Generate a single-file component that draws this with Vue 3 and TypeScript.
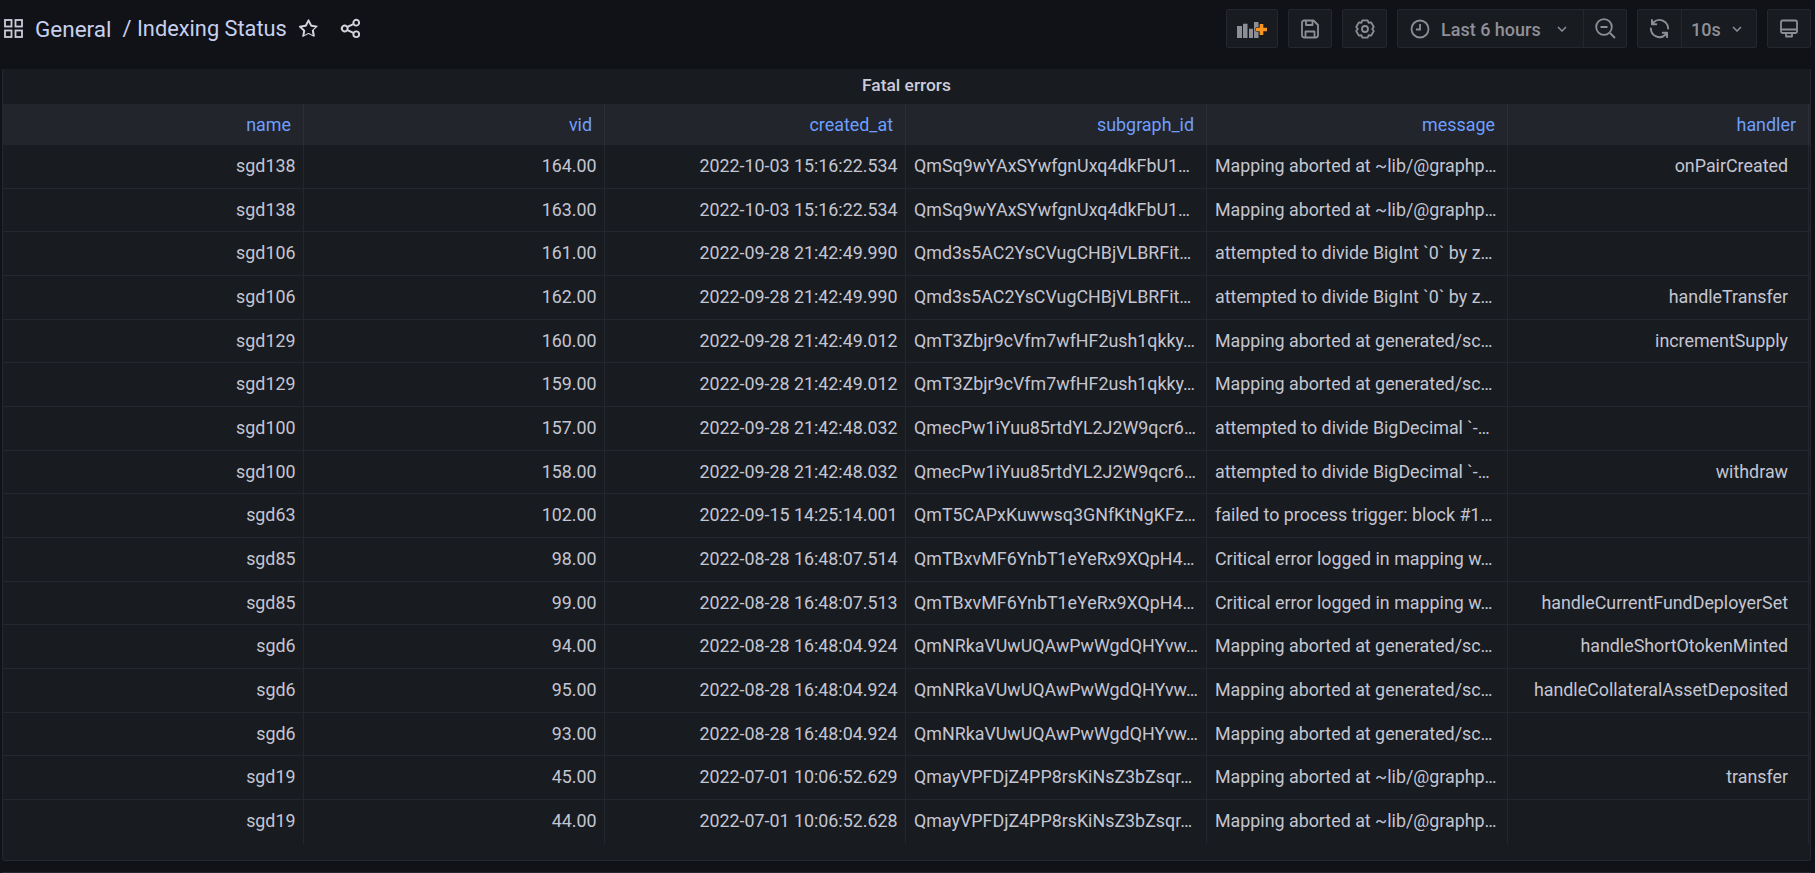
<script setup lang="ts">
interface Row {
  name: string
  vid: string
  created: string
  subgraph: string
  message: string
  handler: string
}

const columns: string[] = ['name', 'vid', 'created_at', 'subgraph_id', 'message', 'handler']

const m1 = 'Mapping aborted at ~lib/@graphp…'
const m2 = 'attempted to divide BigInt `0` by z…'
const m3 = 'Mapping aborted at generated/sc…'
const m4 = 'attempted to divide BigDecimal `-…'
const m5 = 'Critical error logged in mapping w…'

const rows: Row[] = [
  { name: 'sgd138', vid: '164.00', created: '2022-10-03 15:16:22.534', subgraph: 'QmSq9wYAxSYwfgnUxq4dkFbU1…', message: m1, handler: 'onPairCreated' },
  { name: 'sgd138', vid: '163.00', created: '2022-10-03 15:16:22.534', subgraph: 'QmSq9wYAxSYwfgnUxq4dkFbU1…', message: m1, handler: '' },
  { name: 'sgd106', vid: '161.00', created: '2022-09-28 21:42:49.990', subgraph: 'Qmd3s5AC2YsCVugCHBjVLBRFit…', message: m2, handler: '' },
  { name: 'sgd106', vid: '162.00', created: '2022-09-28 21:42:49.990', subgraph: 'Qmd3s5AC2YsCVugCHBjVLBRFit…', message: m2, handler: 'handleTransfer' },
  { name: 'sgd129', vid: '160.00', created: '2022-09-28 21:42:49.012', subgraph: 'QmT3Zbjr9cVfm7wfHF2ush1qkky…', message: m3, handler: 'incrementSupply' },
  { name: 'sgd129', vid: '159.00', created: '2022-09-28 21:42:49.012', subgraph: 'QmT3Zbjr9cVfm7wfHF2ush1qkky…', message: m3, handler: '' },
  { name: 'sgd100', vid: '157.00', created: '2022-09-28 21:42:48.032', subgraph: 'QmecPw1iYuu85rtdYL2J2W9qcr6…', message: m4, handler: '' },
  { name: 'sgd100', vid: '158.00', created: '2022-09-28 21:42:48.032', subgraph: 'QmecPw1iYuu85rtdYL2J2W9qcr6…', message: m4, handler: 'withdraw' },
  { name: 'sgd63', vid: '102.00', created: '2022-09-15 14:25:14.001', subgraph: 'QmT5CAPxKuwwsq3GNfKtNgKFz…', message: 'failed to process trigger: block #1…', handler: '' },
  { name: 'sgd85', vid: '98.00', created: '2022-08-28 16:48:07.514', subgraph: 'QmTBxvMF6YnbT1eYeRx9XQpH4…', message: m5, handler: '' },
  { name: 'sgd85', vid: '99.00', created: '2022-08-28 16:48:07.513', subgraph: 'QmTBxvMF6YnbT1eYeRx9XQpH4…', message: m5, handler: 'handleCurrentFundDeployerSet' },
  { name: 'sgd6', vid: '94.00', created: '2022-08-28 16:48:04.924', subgraph: 'QmNRkaVUwUQAwPwWgdQHYvw…', message: m3, handler: 'handleShortOtokenMinted' },
  { name: 'sgd6', vid: '95.00', created: '2022-08-28 16:48:04.924', subgraph: 'QmNRkaVUwUQAwPwWgdQHYvw…', message: m3, handler: 'handleCollateralAssetDeposited' },
  { name: 'sgd6', vid: '93.00', created: '2022-08-28 16:48:04.924', subgraph: 'QmNRkaVUwUQAwPwWgdQHYvw…', message: m3, handler: '' },
  { name: 'sgd19', vid: '45.00', created: '2022-07-01 10:06:52.629', subgraph: 'QmayVPFDjZ4PP8rsKiNsZ3bZsqr…', message: m1, handler: 'transfer' },
  { name: 'sgd19', vid: '44.00', created: '2022-07-01 10:06:52.628', subgraph: 'QmayVPFDjZ4PP8rsKiNsZ3bZsqr…', message: m1, handler: '' },
]

function gearPath(): string {
  const pts: string[] = []
  const polar = (deg: number, r: number): string => {
    const a = (deg * Math.PI) / 180
    return `${(10 + r * Math.cos(a)).toFixed(2)} ${(10 + r * Math.sin(a)).toFixed(2)}`
  }
  for (let k = 0; k < 6; k++) {
    const c = -90 + k * 60
    pts.push(polar(c - 17, 9), polar(c + 17, 9), polar(c + 30, 7.2))
  }
  return 'M' + pts.join('L') + 'Z'
}
const gear = gearPath()
</script>

<template>
  <div class="page">
    <header class="topbar">
      <div class="crumbs">
        <svg class="ico-apps" viewBox="0 0 19 19" width="19" height="19" fill="none" stroke="#ccccdc" stroke-width="1.8">
          <rect x="1" y="1" width="6.5" height="6.5" />
          <rect x="11.5" y="1" width="6.5" height="6.5" />
          <rect x="1" y="11.5" width="6.5" height="6.5" />
          <rect x="11.5" y="11.5" width="6.5" height="6.5" />
        </svg>
        <span class="crumb-text">General</span>
        <span class="crumb-text crumb-sep">/ Indexing Status</span>
        <svg class="ico-star" viewBox="0 0 24 24" width="23" height="23" fill="#d5d5e0">
          <path d="M22,9.67A1,1,0,0,0,21.14,9l-5.69-.83L12.9,3a1,1,0,0,0-1.8,0L8.55,8.16,2.86,9a1,1,0,0,0-.81.68,1,1,0,0,0,.25,1l4.13,4-1,5.68A1,1,0,0,0,6.9,20.44L12,17.77l5.1,2.67a.93.93,0,0,0,.46.12,1,1,0,0,0,.59-.19,1,1,0,0,0,.4-1l-1-5.68,4.13-4A1,1,0,0,0,22,9.67Zm-6.15,4a1,1,0,0,0-.29.88l.72,4.2-3.76-2a1.06,1.06,0,0,0-.94,0l-3.76,2,.72-4.2a1,1,0,0,0-.29-.88l-3-3,4.21-.61a1,1,0,0,0,.76-.55L12,5.7l1.88,3.82a1,1,0,0,0,.76.55l4.21.61Z" />
        </svg>
        <svg class="ico-share" viewBox="0 0 24 24" width="23" height="23" fill="#d5d5e0">
          <path d="M18,14a4,4,0,0,0-3.08,1.48l-5.1-2.35a3.64,3.64,0,0,0,0-2.26l5.1-2.35A4,4,0,1,0,14,6a4.17,4.17,0,0,0,.07.71L8.79,9.14a4,4,0,1,0,0,5.72l5.28,2.43A4.17,4.17,0,0,0,14,18a4,4,0,1,0,4-4ZM18,4a2,2,0,1,1-2,2A2,2,0,0,1,18,4ZM6,14a2,2,0,1,1,2-2A2,2,0,0,1,6,14Zm12,6a2,2,0,1,1,2-2A2,2,0,0,1,18,20Z" />
        </svg>
      </div>

      <div class="tools">
        <div class="btn btn-add">
          <svg class="ico-add" viewBox="0 0 30 16" width="30" height="16">
            <path fill="#8e8f96" d="M0 4h5v12H0zM6 1.700h4.500V16H6zM12 6.700h4V16h-4zM17 0h4.500v16H17z" />
            <path fill="#f79520" stroke="#181b1f" stroke-width="1" paint-order="stroke" d="M22.700 2h3.600v3.700H30v3.600h-3.700V13h-3.600V9.300H19V5.700h3.700z" />
          </svg>
        </div>
        <div class="btn btn-save">
          <svg viewBox="0 0 20 20" width="20" height="20" fill="none" stroke="#8e8f96" stroke-width="1.8" stroke-linejoin="round">
            <path d="M4 1.500h9.500l4.500 4.500v10a2.500 2.500 0 0 1-2.500 2.500h-11A2.500 2.500 0 0 1 2 16V3.500a2 2 0 0 1 2-2z" />
            <path d="M5.500 18.500v-6h9v6M6 1.500v4.500h6.500v-4.500" />
          </svg>
        </div>
        <div class="btn btn-gear">
          <svg class="ico-gear" viewBox="0 0 20 20" width="20" height="20" fill="none" stroke="#8e8f96" stroke-width="1.800" stroke-linejoin="round">
            <circle cx="10" cy="10" r="3" />
            <path :d="gear" />
          </svg>
        </div>
        <div class="btn-group group-time">
          <div class="seg seg-range">
            <svg viewBox="0 0 20 20" width="20" height="20" fill="none" stroke="#8e8f96" stroke-width="1.800">
              <circle cx="10" cy="10" r="8.500" />
              <path d="M10 5v5.500H6" />
            </svg>
            <span class="tool-text range-label">Last 6 hours</span>
            <svg class="chev" viewBox="0 0 10 6" width="10" height="6" fill="none" stroke="#8e8f96" stroke-width="1.500"><path d="M1 1l4 4 4-4" /></svg>
          </div>
          <div class="seg seg-zoom">
            <svg viewBox="0 0 21 21" width="21" height="21" fill="none" stroke="#8e8f96" stroke-width="1.800">
              <circle cx="9" cy="9" r="7.800" />
              <path d="M5.500 9h7M15 15l5 5" />
            </svg>
          </div>
        </div>
        <div class="btn-group group-refresh">
          <div class="seg seg-refresh">
            <svg viewBox="0 0 24 24" width="23" height="23" fill="#8e8f96">
              <path d="M19.910,15.510H15.380a1,1,0,0,0,0,2h2.400A8,8,0,0,1,4,12a1,1,0,0,0-2,0,10,10,0,0,0,16.880,7.230V21a1,1,0,0,0,2,0V16.500A1,1,0,0,0,19.910,15.510Z" />
              <path d="M12,2A10,10,0,0,0,5.120,4.770V3a1,1,0,0,0-2,0V7.500a1,1,0,0,0,1,1H8.620a1,1,0,0,0,0-2H6.220A8,8,0,0,1,20,12a1,1,0,0,0,2,0A10,10,0,0,0,12,2Z" />
            </svg>
          </div>
          <div class="seg seg-interval">
            <span class="tool-text">10s</span>
            <svg class="chev" viewBox="0 0 10 6" width="10" height="6" fill="none" stroke="#8e8f96" stroke-width="1.500"><path d="M1 1l4 4 4-4" /></svg>
          </div>
        </div>
        <div class="btn btn-monitor">
          <svg viewBox="0 0 20 20" width="20" height="20" fill="none" stroke="#8e8f96" stroke-width="1.800" stroke-linejoin="round">
            <rect x="2" y="1.500" width="16" height="12.500" rx="1.500" />
            <path d="M2 10.500h16M7 14v3.500h6V14" />
          </svg>
        </div>
      </div>
    </header>

    <section class="panel">
      <div class="panel-title">Fatal errors</div>
      <div class="thead">
        <div v-for="c in columns" :key="c" class="th">{{ c }}</div>
      </div>
      <div v-for="(r, i) in rows" :key="i" class="tr">
        <div class="td">{{ r.name }}</div>
        <div class="td">{{ r.vid }}</div>
        <div class="td">{{ r.created }}</div>
        <div class="td td-left">{{ r.subgraph }}</div>
        <div class="td td-left">{{ r.message }}</div>
        <div class="td td-handler">{{ r.handler }}</div>
      </div>
    </section>

    <div class="next-panel"></div>
  </div>
</template>

<style scoped>
.page {
  width: 1815px;
  height: 873px;
  overflow: hidden;
  background: #111217;
  font-family: Roboto, "Liberation Sans", sans-serif;
  color: #ccccdc;
}
.topbar {
  height: 69px;
  padding: 9px 4px 0 4px;
  box-sizing: border-box;
  display: flex;
  justify-content: space-between;
  align-items: flex-start;
}
.crumbs {
  display: flex;
  align-items: center;
  height: 39px;
}
.ico-apps {
  margin-right: 12px;
}
.crumb-text {
  font-size: 22.500px;
  color: #c7d0ee;
  white-space: pre;
}
.crumb-sep {
  margin-left: 11px;
  font-size: 21.800px;
}
.ico-star {
  margin-left: 10px;
}
.ico-share {
  margin-left: 19px;
}
.tools {
  display: flex;
  gap: 10px;
}
.btn,
.btn-group {
  height: 39px;
  box-sizing: border-box;
  background: #181b1f;
  border: 1px solid #24272d;
  border-radius: 2px;
  display: flex;
  align-items: center;
  justify-content: center;
}
.btn-add { width: 52px; }
.btn-save { width: 44px; }
.btn-gear { width: 45px; }
.btn-monitor { width: 44px; }
.group-time { width: 230px; }
.group-refresh { width: 120px; }
.ico-add {
  margin-top: 3px;
}
.ico-gear {
  margin-top: 1px;
}
.seg {
  height: 100%;
  display: flex;
  align-items: center;
  box-sizing: border-box;
}
.seg-range {
  width: 185px;
  padding-left: 12px;
}
.seg-zoom {
  flex: 1;
  justify-content: center;
  border-left: 1px solid #24272d;
}
.seg-refresh {
  width: 43px;
  justify-content: center;
}
.seg-interval {
  flex: 1;
  padding-left: 9px;
  border-left: 1px solid #24272d;
}
.tool-text {
  font-size: 18px;
  font-weight: 500;
  color: #8f9099;
  margin-top: 2px;
}
.range-label {
  margin-left: 11px;
}
.chev {
  margin-left: 16px;
}
.seg-interval .chev {
  margin-left: 11px;
}
.panel {
  width: 1809px;
  height: 792px;
  margin-left: 2px;
  box-sizing: border-box;
  background: #181b1f;
  border: 1px solid #24272d;
  border-top: none;
  border-radius: 0 0 3px 3px;
}
.panel-title {
  height: 35px;
  line-height: 32px;
  text-align: center;
  font-size: 17.400px;
  font-weight: 500;
  color: #ccccdc;
}
.thead,
.tr {
  display: grid;
  grid-template-columns: repeat(6, 301px);
}
.thead {
  height: 41px;
  background: #22252b;
}
.tr {
  height: 43.680px;
  box-sizing: border-box;
  border-bottom: 1px solid #24272d;
}
.tr:last-child {
  border-bottom: none;
}
.th {
  box-sizing: border-box;
  padding: 0 12px;
  line-height: 41px;
  text-align: right;
  font-size: 17.900px;
  color: #6e9fff;
  border-right: 1px solid #2c2f36;
}
.td {
  box-sizing: border-box;
  padding: 0 7.500px 0 8px;
  line-height: 42px;
  text-align: right;
  font-size: 17.850px;
  white-space: nowrap;
  overflow: hidden;
  color: #c4c5d2;
  border-right: 1px solid #24272d;
}
.td-left {
  text-align: left;
}
.td-handler {
  padding-right: 20px;
}
.next-panel {
  margin: 11px 0 0 2px;
  width: 1809px;
  height: 10px;
  background: #181b1f;
  border-top: 1px solid #24272d;
}
</style>

<style>
html, body {
  margin: 0;
  background: #111217;
  overflow: hidden;
}
</style>
